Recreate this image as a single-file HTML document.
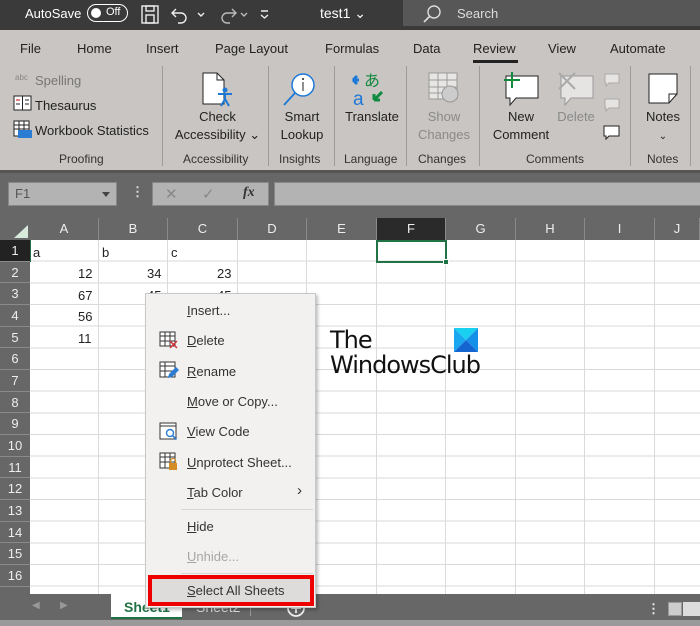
<!DOCTYPE html><html><head><meta charset="utf-8"><style>
*{margin:0;padding:0;box-sizing:border-box}
body{width:700px;height:626px;overflow:hidden;position:relative;font-family:"Liberation Sans",sans-serif;background:#fff}
.a{position:absolute}
.t{font-size:13px;color:#222;white-space:nowrap}
.rb{color:#222;font-size:13px;text-align:center;line-height:18px}
.grp{font-size:12px;color:#333;top:152px}
.sep{top:66px;width:1px;height:100px;background:#9e9c9a}
.ch{top:218px;height:22px;color:#eee;font-size:13px;text-align:center;line-height:22px;border-right:1px solid #8a8a8a}
.rh{left:0;width:30px;color:#eee;font-size:13px;text-align:center;border-bottom:1px solid #8a8a8a}
.mi{left:187px;font-size:13px;color:#333}
.vl{top:240px;width:1px;height:354px;background:#dadada}
</style></head><body>
<div class="a" style="left:0;top:0;width:700px;height:30px;background:#3a3a3a"></div>
<div class="a t" style="left:25px;top:6px;color:#fff;font-size:13px">AutoSave</div>
<div class="a" style="left:87px;top:4px;width:41px;height:18px;border:1.5px solid #fff;border-radius:9px"></div>
<div class="a" style="left:91px;top:8px;width:10px;height:10px;border-radius:5px;background:#fff"></div>
<div class="a t" style="left:106px;top:6px;color:#fff;font-size:11px">Off</div>
<svg class="a" style="left:140px;top:3px" width="140" height="24"><g stroke="#eee" fill="none" stroke-width="1.4"><rect x="2" y="3" width="16" height="17"/><rect x="6" y="12" width="8" height="8"/><rect x="6" y="3" width="8" height="5"/><path d="M36 6 L32 10 L36 14 M32 10 H41 a5 5 0 0 1 0 10 H38"/><path d="M58 10l3 3 3-3"/><path d="M92 6 L96 10 L92 14 M96 10 H87 a5 5 0 0 0 0 10 H90" stroke="#bbb"/><path d="M101 10l3 3 3-3" stroke="#bbb"/><path d="M121 8h7 M121 12l3.5 3 3.5-3"/></g></svg>
<div class="a t" style="left:320px;top:5px;color:#fff;font-size:14px">test1 ⌄</div>
<div class="a" style="left:403px;top:0;width:297px;height:26px;background:#575757"></div>
<svg class="a" style="left:422px;top:4px" width="20" height="20"><circle cx="12" cy="8" r="6" stroke="#ddd" fill="none" stroke-width="1.4"/><path d="M8 12L2 18" stroke="#ddd" stroke-width="1.6"/></svg>
<div class="a t" style="left:457px;top:6px;color:#ddd;font-size:13px">Search</div>
<div class="a" style="left:0;top:30px;width:700px;height:140px;background:#c8c5c2"></div>
<div class="a t" style="left:20px;top:41px">File</div>
<div class="a t" style="left:77px;top:41px">Home</div>
<div class="a t" style="left:146px;top:41px">Insert</div>
<div class="a t" style="left:215px;top:41px">Page Layout</div>
<div class="a t" style="left:325px;top:41px">Formulas</div>
<div class="a t" style="left:413px;top:41px">Data</div>
<div class="a t" style="left:473px;top:41px">Review</div>
<div class="a" style="left:473px;top:60px;width:45px;height:3px;background:#222"></div>
<div class="a t" style="left:548px;top:41px">View</div>
<div class="a t" style="left:610px;top:41px">Automate</div>
<div class="a t" style="left:35px;top:73px;color:#777">Spelling</div>
<div class="a t" style="left:15px;top:73px;color:#888;font-size:8px">abc</div>
<div class="a t" style="left:35px;top:98px">Thesaurus</div>
<svg class="a" style="left:13px;top:95px" width="20" height="17"><rect x="1" y="1" width="17" height="14" fill="#fff" stroke="#222"/><path d="M9.5 1v14M3 5h4M3 9h4M12 5h4M12 9h4" stroke="#222"/><path d="M3 5h4" stroke="#c00"/></svg>
<div class="a t" style="left:35px;top:123px">Workbook Statistics</div>
<svg class="a" style="left:13px;top:120px" width="20" height="18"><rect x="1" y="1" width="15" height="15" fill="#fff" stroke="#222"/><path d="M1 5h15M1 9h15M6 1v15M11 1v15" stroke="#222"/><rect x="5" y="10" width="14" height="8" fill="#2b7cd3"/></svg>
<div class="a grp" style="left:59px">Proofing</div>
<div class="a sep" style="left:162px"></div>
<svg class="a" style="left:202px;top:72px" width="32" height="36"><path d="M1 1h14l7 7v24H1z" fill="#fff" stroke="#222"/><path d="M15 1v7h7" fill="none" stroke="#222"/><circle cx="23" cy="18" r="2.5" fill="#1e78d8"/><path d="M16 22h14M23 21v6l-4 7M23 27l4 7" stroke="#1e78d8" stroke-width="2" fill="none"/></svg>
<div class="a rb" style="left:170px;top:108px;width:95px">Check<br>Accessibility ⌄</div>
<div class="a grp" style="left:183px">Accessibility</div>
<div class="a sep" style="left:268px"></div>
<svg class="a" style="left:282px;top:72px" width="40" height="40"><circle cx="21" cy="13" r="11" fill="#fff" stroke="#1e78d8" stroke-width="1.5"/><path d="M21 10v9" stroke="#222"/><circle cx="21" cy="7" r="1" fill="#222"/><path d="M13 21L2 33" stroke="#1e78d8" stroke-width="1.8"/></svg>
<div class="a rb" style="left:272px;top:108px;width:60px">Smart<br>Lookup</div>
<div class="a grp" style="left:279px">Insights</div>
<div class="a sep" style="left:334px"></div>
<svg class="a" style="left:350px;top:72px" width="40" height="36"><path d="M3 8h6M3 8l4-4M3 8l4 4" stroke="#1e78d8" stroke-width="3"/><text x="14" y="14" font-size="16" fill="#108a3e" font-family="Noto Sans CJK JP,sans-serif">あ</text><text x="3" y="33" font-size="19" fill="#1e78d8" font-family="Liberation Sans">a</text><path d="M24 28l8-8M24 28h6M24 28v-6" stroke="#108a3e" stroke-width="3"/></svg>
<div class="a rb" style="left:340px;top:108px;width:64px">Translate</div>
<div class="a grp" style="left:344px">Language</div>
<div class="a sep" style="left:406px"></div>
<svg class="a" style="left:428px;top:72px" width="36" height="34"><g stroke="#999" fill="#e8e6e4"><rect x="1" y="1" width="28" height="26"/><path d="M1 8h28M1 15h28M1 21h28M10 1v26M19 1v26"/><circle cx="22" cy="22" r="8" fill="#ccc"/></g></svg>
<div class="a rb" style="left:410px;top:108px;width:68px;color:#8a8a8a">Show<br>Changes</div>
<div class="a grp" style="left:418px">Changes</div>
<div class="a sep" style="left:479px"></div>
<svg class="a" style="left:501px;top:72px" width="40" height="36"><path d="M5 4h32v22H15l-6 7v-7H5z" fill="#fff" stroke="#222"/><path d="M11 0v16M3 8h16" stroke="#108a3e" stroke-width="2"/></svg>
<div class="a rb" style="left:488px;top:108px;width:66px">New<br>Comment</div>
<svg class="a" style="left:556px;top:72px" width="40" height="36"><path d="M5 4h32v22H15l-6 7v-7H5z" fill="#e6e4e2" stroke="#999"/><path d="M3 1l16 16M19 1L3 17" stroke="#aaa" stroke-width="2"/></svg>
<div class="a rb" style="left:552px;top:108px;width:48px;color:#8a8a8a">Delete</div>
<svg class="a" style="left:600px;top:72px" width="24" height="70"><g fill="#e6e4e2" stroke="#aaa"><path d="M5 2h14v9H9l-3 3v-3H5z"/><path d="M5 27h14v9H9l-3 3v-3H5z"/></g><path d="M4 54h15v10H9l-3 3v-3H4z" fill="#fff" stroke="#222"/></svg>
<div class="a grp" style="left:526px">Comments</div>
<div class="a sep" style="left:630px"></div>
<svg class="a" style="left:647px;top:72px" width="34" height="36"><path d="M2 2h28v20l-8 9H2z" fill="#fff" stroke="#222"/><path d="M30 22h-8v9" fill="none" stroke="#222"/></svg>
<div class="a rb" style="left:636px;top:108px;width:54px">Notes<br><span style="font-size:10px">⌄</span></div>
<div class="a grp" style="left:647px">Notes</div>
<div class="a sep" style="left:690px"></div>
<div class="a" style="left:0;top:170px;width:700px;height:48px;background:#676767"></div>
<div class="a" style="left:0;top:170px;width:700px;height:3px;background:#555"></div>
<div class="a" style="left:8px;top:182px;width:109px;height:24px;background:#b3b3b3;border:1px solid #888"></div>
<div class="a t" style="left:15px;top:186px;color:#555">F1</div>
<div class="a" style="left:102px;top:192px;border-left:4px solid transparent;border-right:4px solid transparent;border-top:5px solid #444"></div>
<div class="a t" style="left:131px;top:184px;color:#ddd;font-weight:bold">⋮</div>
<div class="a" style="left:152px;top:182px;width:117px;height:24px;background:#b3b3b3;border:1px solid #888"></div>
<div class="a t" style="left:165px;top:185px;color:#888;font-size:15px">✕</div>
<div class="a t" style="left:202px;top:185px;color:#888;font-size:15px">✓</div>
<div class="a t" style="left:243px;top:185px;color:#333;font-family:'Liberation Serif';font-style:italic;font-weight:bold;font-size:14px">fx</div>
<div class="a" style="left:274px;top:182px;width:430px;height:24px;background:#b3b3b3;border:1px solid #888"></div>
<div class="a" style="left:0;top:218px;width:700px;height:22px;background:#676767"></div>
<div class="a" style="left:0;top:218px;width:30px;height:376px;background:#676767"></div>
<div class="a" style="left:14px;top:225px;border-left:14px solid transparent;border-bottom:13px solid #d8eadb"></div>
<div class="a ch" style="left:30px;width:69px">A</div>
<div class="a ch" style="left:99px;width:69px">B</div>
<div class="a ch" style="left:168px;width:70px">C</div>
<div class="a ch" style="left:238px;width:69px">D</div>
<div class="a ch" style="left:307px;width:70px">E</div>
<div class="a ch" style="left:377px;width:69px;background:#2a2a2a">F</div>
<div class="a ch" style="left:446px;width:70px">G</div>
<div class="a ch" style="left:516px;width:69px">H</div>
<div class="a ch" style="left:585px;width:70px">I</div>
<div class="a ch" style="left:655px;width:45px">J</div>
<div class="a" style="left:30px;top:240px;width:670px;height:354px;background:repeating-linear-gradient(to bottom,transparent 0,transparent 20.67px,#dadada 20.67px,#dadada 21.67px)"></div>
<div class="a vl" style="left:98px"></div><div class="a vl" style="left:167px"></div><div class="a vl" style="left:237px"></div><div class="a vl" style="left:306px"></div><div class="a vl" style="left:376px"></div><div class="a vl" style="left:445px"></div><div class="a vl" style="left:515px"></div><div class="a vl" style="left:584px"></div><div class="a vl" style="left:654px"></div>
<div class="a" style="left:29px;top:240px;width:2px;height:22px;background:#217346"></div>
<div id="rows"></div>
<div class="a t" style="left:33px;top:245px">a</div>
<div class="a t" style="left:102px;top:245px">b</div>
<div class="a t" style="left:171px;top:245px">c</div>
<div class="a t" style="left:78px;top:266px">12</div>
<div class="a t" style="left:147px;top:266px">34</div>
<div class="a t" style="left:217px;top:266px">23</div>
<div class="a t" style="left:78px;top:288px">67</div>
<div class="a t" style="left:147px;top:288px">45</div>
<div class="a t" style="left:217px;top:288px">45</div>
<div class="a t" style="left:78px;top:309px">56</div>
<div class="a t" style="left:78px;top:331px">11</div>
<div class="a" style="left:376px;top:240px;width:71px;height:23px;border:2px solid #217346"></div>
<div class="a" style="left:443px;top:259px;width:6px;height:6px;background:#217346;border:1px solid #fff"></div>
<div class="a" style="left:330px;top:328px;font-size:24px;color:#111;line-height:25px;font-family:'DejaVu Sans',sans-serif;letter-spacing:-1px">The<br>WindowsClub</div>
<svg class="a" style="left:454px;top:328px" width="24" height="24"><path d="M0 0h24L12 12z" fill="#1ad0f0"/><path d="M0 0v24l12-12z" fill="#19a8f0"/><path d="M24 0v24L12 12z" fill="#1590e8"/><path d="M0 24h24L12 12z" fill="#1565d0"/></svg>
<div class="a" style="left:0;top:594px;width:700px;height:26px;background:#676767"></div>
<div class="a" style="left:0;top:620px;width:700px;height:6px;background:#9a9a9a"></div>
<div class="a t" style="left:32px;top:600px;color:#999;font-size:10px">◀</div>
<div class="a t" style="left:60px;top:600px;color:#999;font-size:10px">▶</div>
<div class="a" style="left:111px;top:594px;width:71px;height:25px;background:#fff;border-bottom:2px solid #217346"></div>
<div class="a t" style="left:124px;top:599px;color:#217346;font-weight:bold;font-size:14px">Sheet1</div>
<div class="a t" style="left:196px;top:599px;color:#ddd;font-size:14px">Sheet2</div>
<div class="a" style="left:250px;top:598px;width:1px;height:18px;background:#999"></div>
<svg class="a" style="left:286px;top:598px" width="20" height="20"><circle cx="10" cy="10" r="8" fill="none" stroke="#eee" stroke-width="1.8"/><path d="M10 5v10M5 10h10" stroke="#eee" stroke-width="1.8"/></svg>
<div class="a t" style="left:647px;top:601px;color:#eee;font-weight:bold">⋮</div>
<div class="a" style="left:668px;top:602px;width:14px;height:14px;background:#ccc;border:1px solid #999"></div>
<div class="a" style="left:683px;top:602px;width:17px;height:14px;background:#ddd"></div>
<div class="a" style="left:145px;top:293px;width:171px;height:315px;background:#f2f1f0;border:1px solid #c8c8c8;box-shadow:2px 2px 3px rgba(0,0,0,.25)"></div>
<div class="a mi" style="top:303px"><u>I</u>nsert...</div>
<svg class="a" style="left:159px;top:331px" width="20" height="18"><rect x="1" y="1" width="15" height="14" fill="#fff" stroke="#333"/><path d="M1 5h15M1 10h15M6 1v14M11 1v14" stroke="#333"/><path d="M11 10l7 7M18 10l-7 7" stroke="#d13438" stroke-width="1.5"/></svg>
<div class="a mi" style="top:333px"><u>D</u>elete</div>
<svg class="a" style="left:159px;top:361px" width="20" height="19"><rect x="1" y="1" width="15" height="15" fill="#fff" stroke="#333"/><path d="M1 5h15M1 10h15M6 1v15" stroke="#333"/><path d="M9 17l1-4 7-7 3 3-7 7z" fill="#2b7cd3"/></svg>
<div class="a mi" style="top:364px"><u>R</u>ename</div>
<div class="a mi" style="top:394px"><u>M</u>ove or Copy...</div>
<svg class="a" style="left:159px;top:422px" width="20" height="19"><rect x="1" y="1" width="16" height="16" fill="#fff" stroke="#333"/><path d="M1 4h16" stroke="#333"/><circle cx="11" cy="11" r="3.5" fill="none" stroke="#2b7cd3" stroke-width="1.4"/><path d="M13.5 13.5l4 4" stroke="#2b7cd3" stroke-width="1.6"/></svg>
<div class="a mi" style="top:424px"><u>V</u>iew Code</div>
<svg class="a" style="left:159px;top:452px" width="20" height="19"><rect x="1" y="1" width="15" height="15" fill="#fff" stroke="#333"/><path d="M1 5h15M1 10h15M6 1v15M11 1v15" stroke="#333"/><rect x="10" y="11" width="8" height="7" fill="#d38b26"/><path d="M11.5 11v-2a2.5 2.5 0 0 1 5 0v2" fill="none" stroke="#d38b26" stroke-width="1.3"/></svg>
<div class="a mi" style="top:455px"><u>U</u>nprotect Sheet...</div>
<div class="a mi" style="top:485px"><u>T</u>ab Color</div>
<div class="a t" style="left:297px;top:482px;font-size:15px;color:#333">›</div>
<div class="a" style="left:181px;top:509px;width:132px;height:1px;background:#d6d6d6"></div>
<div class="a mi" style="top:519px"><u>H</u>ide</div>
<div class="a mi" style="top:549px;color:#a6a6a6"><u>U</u>nhide...</div>
<div class="a" style="left:181px;top:573px;width:132px;height:1px;background:#d6d6d6"></div>
<div class="a" style="left:148px;top:575px;width:166px;height:31px;background:#dedcda;border:4px solid #ee0000"></div>
<div class="a mi" style="top:583px"><u>S</u>elect All Sheets</div>
<script>
var h='';for(var i=1;i<=16;i++){var t=240+(i-1)*21.67;h+='<div class="a rh" style="top:'+t+'px;height:21.67px;line-height:21px;'+(i==1?'background:#222;':'')+'">'+i+'</div>';}
document.getElementById('rows').outerHTML=h;
</script>
</body></html>
